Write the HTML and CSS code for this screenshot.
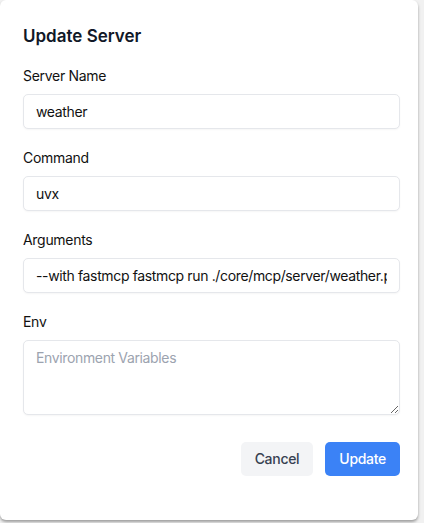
FILE: index.html
```html
<!DOCTYPE html>
<html lang="en">
<head>
<meta charset="utf-8">
<title>Update Server</title>
<link rel="stylesheet" href="styles.css">
</head>
<body>
<div class="dialog">
  <h2 class="title">Update Server</h2>
  <form class="form">
    <div class="field">
      <label class="label" for="name">Server Name</label>
      <input class="input" id="name" type="text" value="weather">
    </div>
    <div class="field">
      <label class="label" for="cmd">Command</label>
      <input class="input" id="cmd" type="text" value="uvx">
    </div>
    <div class="field">
      <label class="label" for="args">Arguments</label>
      <input class="input" id="args" type="text" value="--with fastmcp fastmcp run ./core/mcp/server/weather.py">
    </div>
    <div class="field">
      <label class="label" for="env">Env</label>
      <textarea class="input textarea" id="env" placeholder="Environment Variables"></textarea>
    </div>
    <div class="actions">
      <button type="button" class="btn btn-cancel">Cancel</button>
      <button type="button" class="btn btn-primary">Update</button>
    </div>
  </form>
</div>
</body>
</html>
```

FILE: styles.css
```css
* { box-sizing: border-box; }

html, body {
  margin: 0;
  padding: 0;
}

body {
  width: 424px;
  height: 523px;
  background: #f1f1f1;
  font-family: Inter, "Noto Sans", "Liberation Sans", sans-serif;
  overflow: hidden;
}

.dialog {
  width: 418px;
  height: 520px;
  background: #ffffff;
  border-radius: 6px;
  padding: 24px 18px 0 23px;
  box-shadow: 0 2px 3px rgba(0, 0, 0, 0.35);
}

.title {
  margin: 0 0 18px;
  font-size: 17px;
  line-height: 24px;
  font-weight: 600;
  color: #111827;
}

.form {
  display: flex;
  flex-direction: column;
  gap: 19px;
}

.field {
  display: flex;
  flex-direction: column;
  gap: 8px;
}

.label {
  font-size: 14px;
  line-height: 20px;
  font-weight: 400;
  letter-spacing: -0.3px;
  color: #111111;
}

.input {
  display: block;
  width: 100%;
  height: 35px;
  margin: 0;
  padding: 0 12px;
  border: 1px solid #e5e7eb;
  border-radius: 5px;
  background: #ffffff;
  font-family: inherit;
  font-size: 14px;
  line-height: 20px;
  letter-spacing: -0.36px;
  color: #111111;
  box-shadow: 0 1px 2px rgba(0, 0, 0, 0.04);
  outline: none;
}

.textarea {
  height: 75px;
  padding: 7px 12px;
  resize: vertical;
}

.textarea::placeholder {
  color: #9ca3af;
}

.actions {
  display: flex;
  justify-content: flex-end;
  gap: 12px;
  margin-top: 8px;
}

.btn {
  height: 34px;
  padding: 0 14px;
  border: none;
  border-radius: 5px;
  font-family: inherit;
  font-size: 14px;
  font-weight: 500;
  line-height: 20px;
  letter-spacing: -0.3px;
  cursor: pointer;
}

.btn-cancel {
  background: #f3f4f6;
  color: #374151;
}

.btn-primary {
  background: #3b82f6;
  color: #ffffff;
}
```
